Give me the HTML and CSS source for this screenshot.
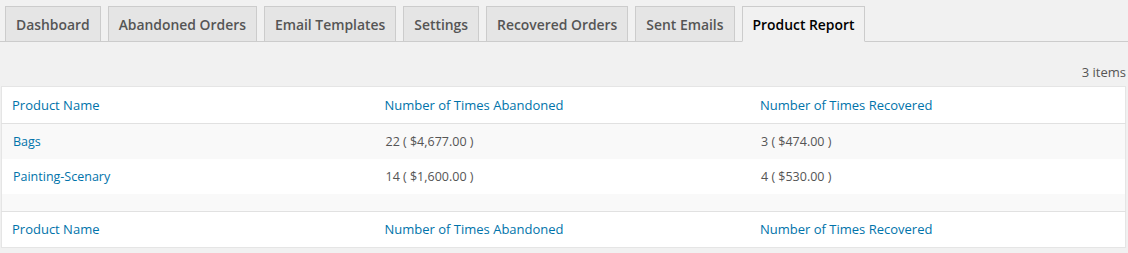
FILE: index.html
```html
<!DOCTYPE html>
<html lang="en">
<head>
<meta charset="UTF-8">
<meta name="viewport" content="width=device-width, initial-scale=1.0">
<title>Product Report</title>
<link rel="stylesheet" href="styles.css">
</head>
<body>
<div class="wrap">
    <nav class="nav-tab-wrapper">
        <a class="nav-tab" href="#">Dashboard</a>
        <a class="nav-tab" href="#">Abandoned Orders</a>
        <a class="nav-tab" href="#">Email Templates</a>
        <a class="nav-tab" href="#">Settings</a>
        <a class="nav-tab" href="#">Recovered Orders</a>
        <a class="nav-tab" href="#">Sent Emails</a>
        <a class="nav-tab nav-tab-active" href="#">Product Report</a>
    </nav>

    <div class="tablenav">
        <span class="displaying-num">3 items</span>
    </div>

    <table class="widefat">
        <colgroup>
            <col class="col-name">
            <col>
            <col>
        </colgroup>
        <thead>
            <tr>
                <th><a href="#">Product Name</a></th>
                <th><a href="#">Number of Times Abandoned</a></th>
                <th><a href="#">Number of Times Recovered</a></th>
            </tr>
        </thead>
        <tbody>
            <tr class="alternate">
                <td><a href="#">Bags</a></td>
                <td>22 ( $4,677.00 )</td>
                <td>3 ( $474.00 )</td>
            </tr>
            <tr>
                <td><a href="#">Painting-Scenary</a></td>
                <td>14 ( $1,600.00 )</td>
                <td>4 ( $530.00 )</td>
            </tr>
            <tr class="alternate empty">
                <td></td>
                <td></td>
                <td></td>
            </tr>
        </tbody>
        <tfoot>
            <tr>
                <th><a href="#">Product Name</a></th>
                <th><a href="#">Number of Times Abandoned</a></th>
                <th><a href="#">Number of Times Recovered</a></th>
            </tr>
        </tfoot>
    </table>
</div>
</body>
</html>
```

FILE: styles.css
```css
html, body {
    margin: 0;
    padding: 0;
    background: #f1f1f1;
}

body {
    font-family: "Open Sans", "Noto Sans", sans-serif;
    font-size: 12.5px;
    color: #444;
}

a {
    color: #0073aa;
    text-decoration: none;
}

.wrap {
    padding: 6px 2px 0 1px;
}

.nav-tab-wrapper {
    display: flex;
    gap: 7px;
    padding-left: 5px;
    margin: 0 -2px 0 -1px;
    border-bottom: 1px solid #ccc;
}

.nav-tab {
    padding: 6px 10px 4px;
    margin-bottom: -1px;
    font-size: 13.9px;
    line-height: 24px;
    font-weight: 600;
    color: #555;
    background: #e5e5e5;
    border: 1px solid #ccc;
    border-bottom: 1px solid #ccc;
}

.nav-tab-active {
    color: #000;
    background: #f1f1f1;
    border-bottom-color: #f1f1f1;
}

.tablenav {
    display: flex;
    justify-content: flex-end;
    height: 30px;
    padding-top: 20px;
    box-sizing: border-box;
    margin-bottom: 14px;
}

.displaying-num {
    color: #555;
    font-size: 13px;
    line-height: 20px;
}

.widefat {
    width: 100%;
    table-layout: fixed;
    border-collapse: collapse;
    background: #fff;
    border: 1px solid #e5e5e5;
    box-shadow: 0 1px 1px rgba(0, 0, 0, 0.04);
}

.widefat .col-name {
    width: 373px;
}

.widefat th {
    text-align: left;
    font-weight: 400;
    font-size: 13px;
    line-height: 20px;
    padding: 8px 10px;
}

.widefat thead th {
    border-bottom: 1px solid #e1e1e1;
}

.widefat tfoot th {
    line-height: 19px;
    border-top: 1px solid #e1e1e1;
}

.widefat td {
    padding: 8px 10px 8px 11px;
    line-height: 19px;
    color: #555;
}

.widefat tr.alternate {
    background: #f9f9f9;
}

.widefat tr.empty td {
    padding: 0;
    height: 17px;
}
```
